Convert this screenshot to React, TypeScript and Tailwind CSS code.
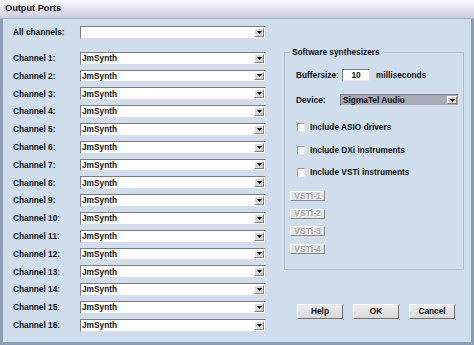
const channels = Array.from({ length: 16 }, (_, i) => i + 1);

const font = { fontFamily: '"Liberation Sans", Arial, sans-serif' };

const Arrow = () => (
  <span className="flex h-full w-[10px] items-center justify-center border border-t-white border-l-white border-r-[#808080] border-b-[#808080] bg-[#d8d8d8]">
    <svg width="5" height="3" viewBox="0 0 5 3">
      <path d="M0 0h5L2.5 3z" fill="#000" />
    </svg>
  </span>
);

const Combo = ({ value }: { value?: string }) => (
  <div className="flex h-[12.8px] w-[186px] items-center border border-t-[#7c7c7c] border-l-[#7c7c7c] border-r-[#dcdcdc] border-b-[#dcdcdc] bg-white pr-px py-px">
    <span className="flex-1 pl-[1px] text-[8.3px] leading-none font-bold text-[#111]">{value}</span>
    <Arrow />
  </div>
);

const Check = ({ label }: { label: string }) => (
  <label className="flex h-[9px] items-center gap-[5px] pl-[12px]">
    <span className="h-[9px] w-[8px] border border-t-[#9a9a9a] border-l-[#9a9a9a] border-r-[#e6e6e6] border-b-[#e6e6e6] bg-[#f6f6f6]" />
    <span className="text-[8.3px] leading-none font-bold text-[#111]">{label}</span>
  </label>
);

const VstButton = ({ label }: { label: string }) => (
  <div className="flex h-[10px] w-[35px] items-center justify-center border border-t-white border-l-white border-r-[#8a8a8a] border-b-[#8a8a8a] bg-[#e2e2e2] text-[8.6px] leading-none font-bold text-[#a4a4a4] [text-shadow:1px_1px_0_#fff]">
    {label}
  </div>
);

const DlgButton = ({ label }: { label: string }) => (
  <button className="flex h-[15px] w-[46px] items-center justify-center border border-t-white border-l-white border-r-[#6e6e6e] border-b-[#6e6e6e] bg-gradient-to-b from-[#ededed] to-[#d9d9d9] text-[8.3px] leading-none font-bold text-[#111]">
    {label}
  </button>
);

export default function App() {
  return (
    <div className="flex h-[345px] w-[474px] flex-col bg-[#8e9db5]" style={font}>
      <div className="flex h-[19px] items-center border-b border-[#a3aec4] bg-gradient-to-b from-[#fbfbfd] to-[#cacbe0] pl-[5px]">
        <span className="text-[9.2px] leading-none font-bold text-[#1a1a2a]">Output Ports</span>
      </div>

      <div className="mx-[3px] mb-[3px] flex flex-1 bg-[#cfdded]">
        <div className="flex flex-col pl-[10px] pt-[7px]">
          <div className="flex items-center">
            <span className="w-[67px] text-[8.3px] leading-none font-bold text-[#111]">All channels:</span>
            <Combo />
          </div>
          <div className="mt-[13px] flex flex-col gap-[5px]">
            {channels.map((n) => (
              <div key={n} className="flex items-center">
                <span className="w-[67px] text-[8.3px] leading-none font-bold text-[#111]">Channel {n}:</span>
                <Combo value="JmSynth" />
              </div>
            ))}
          </div>
        </div>

        <div className="ml-[18px] flex flex-col pt-[28px]">
          <fieldset className="w-[180px] border border-[#b2bccb] pb-[15px]">
            <legend className="ml-[5px] px-[2px] text-[8.3px] leading-[10px] font-bold text-[#111]">
              Software synthesizers
            </legend>

            <div className="mt-[12px] flex items-center pl-[11px]">
              <span className="w-[46px] text-[8.3px] leading-none font-bold text-[#111]">Buffersize:</span>
              <span className="flex h-[12px] w-[28px] items-center justify-center border border-t-[#7c7c7c] border-l-[#7c7c7c] border-r-[#e0e0e0] border-b-[#e0e0e0] bg-white text-[8.3px] leading-none font-bold text-[#111]">
                10
              </span>
              <span className="ml-[6px] text-[8.3px] leading-none font-bold text-[#111]">milliseconds</span>
            </div>

            <div className="mt-[13px] flex items-center pl-[11px]">
              <span className="w-[44px] text-[8.3px] leading-none font-bold text-[#111]">Device:</span>
              <div className="flex h-[12px] w-[119px] items-center border border-t-[#7c7c7c] border-l-[#7c7c7c] border-r-[#e0e0e0] border-b-[#e0e0e0] bg-[#a9a9b9] py-px pr-px">
                <span className="flex-1 pl-[2px] text-[8.3px] leading-none font-bold text-[#111]">SigmaTel Audio</span>
                <Arrow />
              </div>
            </div>

            <div className="mt-[17px] flex flex-col gap-[13.5px]">
              <Check label="Include ASIO drivers" />
              <Check label="Include DXi instruments" />
              <Check label="Include VSTi instruments" />
            </div>

            <div className="mt-[14px] flex flex-col gap-[7.7px] pl-[5px]">
              <VstButton label="VSTi-1" />
              <VstButton label="VSTi-2" />
              <VstButton label="VSTi-3" />
              <VstButton label="VSTi-4" />
            </div>
          </fieldset>

          <div className="mt-[34px] flex gap-[10px] pl-[13px]">
            <DlgButton label="Help" />
            <DlgButton label="OK" />
            <DlgButton label="Cancel" />
          </div>
        </div>
      </div>
    </div>
  );
}
